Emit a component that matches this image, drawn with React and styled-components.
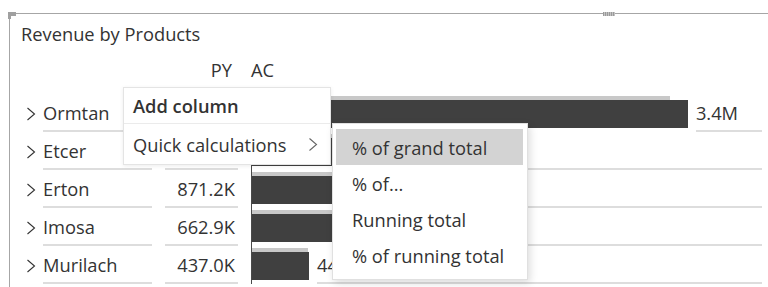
import React from "react";
import styled, { createGlobalStyle } from "styled-components";

const FS = "18.3px";

const GlobalStyle = createGlobalStyle`
  html, body { margin: 0; padding: 0; background: #ffffff; }
  body { font-family: "Open Sans", "Noto Sans", sans-serif; color: #333333; }
`;

const PX_PER_MILLION = 128.2;

const rows = [
  { name: "Ormtan", py: 3.26, ac: 3.4 },
  { name: "Etcer", py: 1.52, ac: 1.61 },
  { name: "Erton", py: 0.8712, ac: 1.18 },
  { name: "Imosa", py: 0.6629, ac: 0.91 },
  { name: "Murilach", py: 0.437, ac: 0.4452 },
];

const fmt = (v) => (v >= 1 ? `${v.toFixed(1)}M` : `${(v * 1000).toFixed(1)}K`);

const Page = styled.div`
  position: relative;
  width: 768px;
  height: 287px;
  overflow: hidden;
`;

const Frame = styled.div`
  position: relative;
  margin: 13px 0 0 9px;
  height: 274px;
  border-top: 1px solid #a6a6a6;
  border-left: 1px solid #a6a6a6;
  padding-top: 8px;
  box-sizing: border-box;
`;

const CornerMark = styled.div`
  position: absolute;
  left: -2px;
  top: -2px;
  width: 8px;
  height: 4px;
  background: #a0a0a0;
  &::after {
    content: "";
    position: absolute;
    left: 0;
    top: 4px;
    width: 3px;
    height: 3px;
    background: #a0a0a0;
  }
`;

const TopHandle = styled.div`
  position: absolute;
  left: 593px;
  top: -2px;
  width: 12px;
  height: 4px;
  background: repeating-linear-gradient(90deg, #9a9a9a 0 1px, #c4c4c4 1px 2px);
`;

const Title = styled.div`
  padding-left: 11px;
  font-size: ${FS};
  line-height: 24px;
  color: #333333;
`;

const Line = styled.div`
  display: flex;
  margin: 0 6px 0 13px;
`;

const HeaderLine = styled(Line)`
  margin-top: 12px;
  margin-bottom: 12px;
  height: 24px;
  font-size: ${FS};
  line-height: 24px;
`;

const Row = styled(Line)`
  height: 38px;
`;

const ChevronCell = styled.div`
  width: 20px;
  display: flex;
  align-items: center;
  padding-left: 3px;
  padding-top: 2px;
  box-sizing: border-box;
`;

const NameCell = styled.div`
  width: 109px;
  display: flex;
  align-items: center;
  border-bottom: ${(p) => (p.$plain ? "none" : "2px solid #dddddd")};
  font-size: ${FS};
  white-space: nowrap;
`;

const PyCell = styled.div`
  width: 73px;
  margin-left: 13px;
  display: flex;
  align-items: center;
  justify-content: flex-end;
  padding-right: ${(p) => (p.$header ? "6px" : "3px")};
  box-sizing: border-box;
  border-bottom: ${(p) => (p.$header ? "none" : "2px solid #dddddd")};
  font-size: ${FS};
  white-space: nowrap;
`;

const ChartCell = styled.div`
  flex: 1;
  margin-left: 13px;
  display: flex;
  border-left: ${(p) => (p.$header ? "none" : "1px solid #4a4a4a")};
  font-size: ${FS};
`;

const BarStack = styled.div`
  display: grid;
  align-items: start;
`;

const Bar = styled.div`
  grid-area: 1 / 1;
  height: 28px;
  margin-top: ${(p) => (p.$prior ? "2px" : "6px")};
  background: ${(p) => (p.$prior ? "#c8c8c8" : "#404040")};
`;

const ValueLabel = styled.div`
  flex: 1;
  margin-left: 8px;
  display: flex;
  align-items: center;
  border-bottom: 2px solid #dddddd;
  white-space: nowrap;
  font-size: ${FS};
`;

const Menu = styled.div`
  position: absolute;
  left: 123px;
  top: 87px;
  width: 208px;
  height: 78px;
  box-sizing: border-box;
  background: #ffffff;
  border: 1px solid #e4e4e4;
  box-shadow: 0 1px 4px rgba(0, 0, 0, 0.08);
  display: flex;
  flex-direction: column;
`;

const MenuItem = styled.div`
  height: ${(p) => (p.$first ? "35px" : "auto")};
  flex: ${(p) => (p.$first ? "none" : "1")};
  display: flex;
  align-items: center;
  justify-content: space-between;
  padding: 0 12px 0 9px;
  font-size: ${FS};
  font-weight: ${(p) => (p.$bold ? 600 : 400)};
  color: #333333;
  border-bottom: ${(p) => (p.$first ? "1px solid #ebebeb" : "none")};
  white-space: nowrap;
`;

const SubMenu = styled.div`
  position: absolute;
  left: 332px;
  top: 123px;
  width: 196px;
  height: 157px;
  box-sizing: border-box;
  background: #ffffff;
  border: 1px solid #e0e0e0;
  box-shadow: 2px 3px 8px rgba(0, 0, 0, 0.14);
  padding: 5px 4px 6px 3px;
  display: flex;
  flex-direction: column;
`;

const SubItem = styled.div`
  height: 36px;
  display: flex;
  align-items: center;
  padding-left: 16px;
  font-size: ${FS};
  color: #333333;
  background: ${(p) => (p.$active ? "#d3d3d3" : "transparent")};
  white-space: nowrap;
`;

const Chevron = ({ color = "#333", w = 10, h = 14 }) => (
  <svg width={w} height={h} viewBox="0 0 10 14" fill="none">
    <polyline points="1.5,1 8.5,7 1.5,13" stroke={color} strokeWidth="1.1" strokeLinejoin="miter" />
  </svg>
);

export default function App() {
  return (
    <Page>
      <GlobalStyle />
      <Frame>
        <CornerMark />
        <TopHandle />
        <Title>Revenue by Products</Title>
        <HeaderLine>
          <ChevronCell />
          <NameCell $plain />
          <PyCell $header>PY</PyCell>
          <ChartCell $header>AC</ChartCell>
        </HeaderLine>
        {rows.map((r) => {
          const pyW = r.py * PX_PER_MILLION;
          const acW = r.ac * PX_PER_MILLION;
          return (
            <Row key={r.name}>
              <ChevronCell>
                <Chevron />
              </ChevronCell>
              <NameCell>{r.name}</NameCell>
              <PyCell>{fmt(r.py)}</PyCell>
              <ChartCell>
                <BarStack style={{ width: Math.max(pyW, acW) }}>
                  <Bar $prior style={{ width: pyW }} />
                  <Bar style={{ width: acW }} />
                </BarStack>
                <ValueLabel>{fmt(r.ac)}</ValueLabel>
              </ChartCell>
            </Row>
          );
        })}
      </Frame>
      <Menu>
        <MenuItem $first $bold>Add column</MenuItem>
        <MenuItem>
          Quick calculations
          <Chevron color="#666" w={10} h={15} />
        </MenuItem>
      </Menu>
      <SubMenu>
        <SubItem $active>% of grand total</SubItem>
        <SubItem>% of...</SubItem>
        <SubItem>Running total</SubItem>
        <SubItem>% of running total</SubItem>
      </SubMenu>
    </Page>
  );
}
